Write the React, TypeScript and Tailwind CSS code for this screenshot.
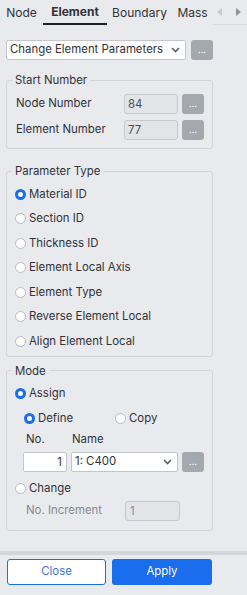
import React from "react";

type RadioProps = { label: string; checked?: boolean; className?: string };

function Radio({ label, checked, className }: RadioProps) {
  return (
    <div className={"flex items-center h-[24.5px] " + (className ?? "")}>
      {checked ? (
        <span className="w-[11px] h-[11px] rounded-full border-[3px] border-[#1a6ded] bg-white shrink-0" />
      ) : (
        <span className="w-[11px] h-[11px] rounded-full border border-[#b9bbc0] bg-white shrink-0" />
      )}
      <span className="ml-[3px]">{label}</span>
    </div>
  );
}

function DotsButton() {
  return (
    <button className="w-[22px] h-[20px] rounded-[3px] bg-[#a4a8af] text-white text-[9px] leading-[20px] shrink-0">
      ...
    </button>
  );
}

function Chevron() {
  return (
    <svg width="9" height="6" viewBox="0 0 9 6" className="shrink-0">
      <path d="M1 1 L4.5 4.5 L8 1" fill="none" stroke="#5a5d66" strokeWidth="1.6" />
    </svg>
  );
}

export default function App() {
  return (
    <div
      className="w-[247px] h-[595px] bg-[#e9eaee] flex flex-col text-[11.4px] text-[#30323a] overflow-hidden"
      style={{ fontFamily: "Inter, 'Liberation Sans', sans-serif" }}
    >
      {/* tabs */}
      <div className="flex h-[25px] items-stretch text-[12px]">
        <div className="w-[43px] flex items-center justify-center">Node</div>
        <div className="w-[64px] flex items-center justify-center font-bold border-b-2 border-[#1f2026]">
          Element
        </div>
        <div className="w-[65px] flex items-center justify-center">Boundary</div>
        <div className="w-[41px] flex items-center justify-center">Mass</div>
        <div className="flex-1 flex items-center border-b border-[#dcdde1]">
          <svg width="6" height="8" viewBox="0 0 6 8" className="ml-[4px]">
            <path d="M5 0 L0 4 L5 8 Z" fill="#c9cace" />
          </svg>
          <svg width="6" height="8" viewBox="0 0 6 8" className="ml-[13px]">
            <path d="M0 0 L5 4 L0 8 Z" fill="#8f9197" />
          </svg>
        </div>
      </div>

      {/* command select */}
      <div className="flex items-center mt-[15px] ml-[6px] gap-[5px]">
        <div className="w-[180px] h-[20px] bg-white border border-[#c3c5ca] rounded-[2px] flex items-center pl-[3px] pr-[5px]">
          <span className="flex-1 truncate">Change Element Parameters</span>
          <Chevron />
        </div>
        <DotsButton />
      </div>

      {/* start number */}
      <fieldset className="mt-[12px] ml-[6px] w-[207px] border border-[#d2d4d8] rounded-[3px] pl-[9px] pr-[7px] pb-[8px]">
        <legend className="ml-[-4px] px-[3px] leading-[16px]">Start Number</legend>
        <div className="flex flex-col gap-[6px] pt-[6px]">
          <div className="flex items-center h-[20px]">
            <span className="w-[108px]">Node Number</span>
            <div className="w-[54px] h-[20px] bg-[#e3e4e8] border border-[#c6c8cc] rounded-[3px] px-[3px] leading-[18px] text-[#4a4c55]">
              84
            </div>
            <div className="ml-[4px]">
              <DotsButton />
            </div>
          </div>
          <div className="flex items-center h-[20px]">
            <span className="w-[108px]">Element Number</span>
            <div className="w-[54px] h-[20px] bg-[#e3e4e8] border border-[#c6c8cc] rounded-[3px] px-[3px] leading-[18px] text-[#4a4c55]">
              77
            </div>
            <div className="ml-[4px]">
              <DotsButton />
            </div>
          </div>
        </div>
      </fieldset>

      {/* parameter type */}
      <fieldset className="mt-[14px] ml-[6px] w-[207px] border border-[#d2d4d8] rounded-[3px] pl-[8px] pb-[2px]">
        <legend className="ml-[-3px] px-[3px] leading-[16px]">Parameter Type</legend>
        <div className="pt-[3px]">
          <Radio label="Material ID" checked />
          <Radio label="Section ID" />
          <Radio label="Thickness ID" />
          <Radio label="Element Local Axis" />
          <Radio label="Element Type" />
          <Radio label="Reverse Element Local" />
          <Radio label="Align Element Local" />
        </div>
      </fieldset>

      {/* mode */}
      <fieldset className="mt-[6px] ml-[6px] w-[207px] border border-[#d2d4d8] rounded-[3px] pl-[8px] pb-[9px]">
        <legend className="ml-[-3px] px-[3px] leading-[16px]">Mode</legend>
        <div className="pt-[3px]">
          <Radio label="Assign" checked />
          <div className="flex ml-[9px]">
            <Radio label="Define" checked className="w-[91px]" />
            <Radio label="Copy" />
          </div>
          <div className="flex items-center h-[18px] ml-[11px]">
            <span className="w-[46px]">No.</span>
            <span>Name</span>
          </div>
          <div className="flex items-center mt-[3px] ml-[8px]">
            <div className="w-[44px] h-[20px] bg-white border border-[#c3c5ca] rounded-[2px] text-right pr-[4px] leading-[18px]">
              1
            </div>
            <div className="ml-[4px] w-[107px] h-[20px] bg-white border border-[#c3c5ca] rounded-[2px] flex items-center pl-[3px] pr-[5px]">
              <span className="flex-1">1: C400</span>
              <Chevron />
            </div>
            <div className="ml-[4px]">
              <DotsButton />
            </div>
          </div>
          <Radio label="Change" className="mt-[5px]" />
          <div className="flex items-center h-[20px]">
            <span className="w-[99px] ml-[11px] text-[#868993]">No. Increment</span>
            <div className="w-[55px] h-[20px] bg-[#e3e4e8] border border-[#c6c8cc] rounded-[3px] px-[4px] leading-[18px] text-[#868993]">
              1
            </div>
          </div>
        </div>
      </fieldset>

      {/* footer */}
      <div className="mt-[20px] h-[4px] bg-[#d5d6da]" />
      <div className="flex mt-[4px] ml-[7px] gap-[6px]">
        <button className="w-[99px] h-[26px] bg-white border border-[#1a6ded] rounded-[3px] text-[#3b73d8]">
          Close
        </button>
        <button className="w-[100px] h-[26px] bg-[#1a6ded] rounded-[3px] text-white">Apply</button>
      </div>
    </div>
  );
}
